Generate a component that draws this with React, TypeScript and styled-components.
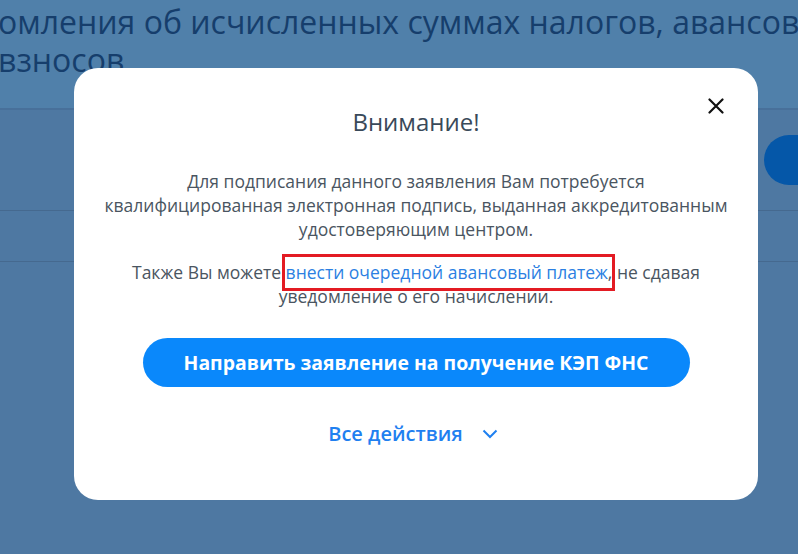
import styled, { createGlobalStyle } from "styled-components";

const GlobalStyle = createGlobalStyle`
  html, body {
    margin: 0;
    padding: 0;
    width: 798px;
    height: 554px;
    overflow: hidden;
    font-family: "Open Sans", "Liberation Sans", sans-serif;
  }
`;

// page behind the dimmed overlay
const Page = styled.div`
  position: relative;
  width: 798px;
  height: 554px;
  overflow: hidden;
  background: #4e78a2;
`;

const Header = styled.div`
  height: 108px;
  background: #5080aa;
  border-bottom: 2px solid #48709a;
  overflow: hidden;
`;

const PageTitle = styled.h1`
  margin: 0;
  padding: 3px 0 0 0;
  margin-left: -2px;
  font-size: 32px;
  font-weight: 400;
  line-height: 38px;
  color: #163e6c;
  white-space: nowrap;
`;

const Toolbar = styled.div`
  height: 100px;
  display: flex;
  justify-content: flex-end;
  align-items: center;
  border-bottom: 1px solid #45698f;
`;

const PillButton = styled.div`
  width: 80px;
  height: 50px;
  margin-right: -46px;
  border-radius: 25px;
  background: #0557a8;
`;

const Row = styled.div`
  height: 50px;
  border-bottom: 1px solid #45698f;
`;

const Overlay = styled.div`
  position: absolute;
  inset: 0;
  padding: 68px 0 0 74px;
`;

const Modal = styled.div`
  position: relative;
  width: 684px;
  box-sizing: border-box;
  padding: 39px 10px 54px;
  background: #fff;
  border-radius: 24px;
  text-align: center;
`;

const CloseButton = styled.button`
  position: absolute;
  top: 22px;
  right: 26px;
  width: 32px;
  height: 32px;
  padding: 0;
  border: none;
  background: transparent;
  display: flex;
  align-items: center;
  justify-content: center;
`;

const Title = styled.h2`
  margin: 0 0 32px;
  font-size: 24px;
  line-height: 30px;
  font-weight: 400;
  color: #394959;
`;

const Text = styled.p<{ $gap: number }>`
  margin: 0 0 ${(p) => p.$gap}px;
  font-size: 17.5px;
  line-height: 24px;
  color: #4a5561;
  white-space: nowrap;
`;

const Link = styled.a`
  position: relative;
  color: #2c7fe2;
  text-decoration: none;

  &::after {
    content: "";
    position: absolute;
    top: -6px;
    bottom: -7px;
    left: -4px;
    right: -7px;
    border: 3px solid #e31b23;
    pointer-events: none;
  }
`;

const PrimaryButton = styled.button`
  display: block;
  width: 547px;
  height: 49px;
  margin: 0 auto;
  border: none;
  border-radius: 25px;
  background: #0a88fb;
  color: #fff;
  font-family: inherit;
  font-size: 19.4px;
  font-weight: 700;
`;

const Actions = styled.button`
  display: inline-flex;
  align-items: center;
  gap: 19px;
  margin-top: 35px;
  margin-left: -6px;
  padding: 0;
  border: none;
  background: transparent;
  color: #1f80f0;
  font-family: inherit;
  font-size: 20px;
  line-height: 24px;
  font-weight: 600;
`;

export default function App() {
    return (
        <>
            <GlobalStyle />
            <Page>
                <Header>
                    <PageTitle>
                        омления об исчисленных суммах налогов, авансовых платежей
                        <br />
                        взносов
                    </PageTitle>
                </Header>
                <Toolbar>
                    <PillButton />
                </Toolbar>
                <Row />
                <Overlay>
                    <Modal>
                        <CloseButton aria-label="Закрыть">
                            <svg width="16" height="16" viewBox="0 0 16 16">
                                <path d="M1.5 1.5 L14.5 14.5 M14.5 1.5 L1.5 14.5" stroke="#111" strokeWidth="2.2" strokeLinecap="round" />
                            </svg>
                        </CloseButton>
                        <Title>Внимание!</Title>
                        <Text $gap={19}>
                            Для подписания данного заявления Вам потребуется
                            <br />
                            квалифицированная электронная подпись, выданная аккредитованным
                            <br />
                            удостоверяющим центром.
                        </Text>
                        <Text $gap={30}>
                            Также Вы можете <Link href="#">внести очередной авансовый платеж</Link>, не сдавая
                            <br />
                            уведомление о его начислении.
                        </Text>
                        <PrimaryButton>Направить заявление на получение КЭП ФНС</PrimaryButton>
                        <Actions>
                            Все действия
                            <svg width="16" height="10" viewBox="0 0 16 10">
                                <path d="M1.5 1.5 L8 8 L14.5 1.5" fill="none" stroke="#1f80f0" strokeWidth="2" />
                            </svg>
                        </Actions>
                    </Modal>
                </Overlay>
            </Page>
        </>
    );
}
